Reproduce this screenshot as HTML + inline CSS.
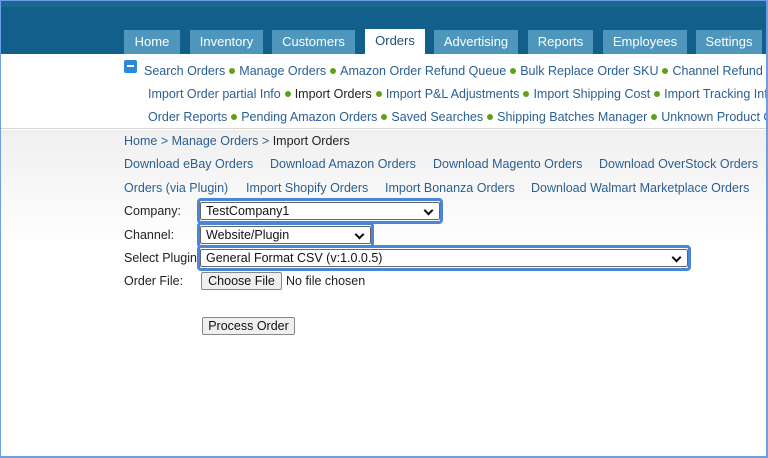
<!DOCTYPE html>
<html><head><style>
*{margin:0;padding:0;box-sizing:border-box}
body{width:768px;height:458px;overflow:hidden;font-family:"Liberation Sans",Arial,sans-serif;background:#fff;position:relative}
.frame{position:absolute;left:0;top:0;width:768px;height:458px;border:2px solid #6c9fe6;border-top:1px solid #6c9fe6;border-left:1px solid #6c9fe6;z-index:10;pointer-events:none}
.hdr{position:absolute;left:0;top:0;width:768px;height:54px;background:#135f8c}
.hdr .band{position:absolute;left:0;top:0;width:768px;height:7px;background:#1a6792}
.tab{position:absolute;top:30px;height:24px;background:#4e96bb;color:#fff;font-size:13px;text-align:center;line-height:24px}
.tab.a{background:#fff;color:#1c4f78;top:29px;height:25px}
.sub{position:absolute;left:0;top:54px;width:768px;height:75px;background:#fff;border-bottom:1px solid #d5d5d5}
.row{position:absolute;font-size:12.5px;color:#2a5f93;white-space:nowrap}
.row b{display:inline-block;width:6px;height:6px;border-radius:50%;background:#5ea21a;margin:0 4px 1px;vertical-align:middle}
.k{color:#222}
.main{position:absolute;left:0;top:130px;width:768px;height:328px;background:linear-gradient(#f0f0f0,#fff 120px)}
.t{position:absolute;font-size:12.5px;white-space:nowrap}
.lnk{color:#2a5f93}
.lbl{color:#222}
.ring{position:absolute;border:3px solid #4a86d6;border-radius:4px}
.sel{position:absolute;height:18px;border:1px solid #666;background:#fff;font-size:12.5px;color:#111;padding-left:5px;line-height:16px;border-radius:2px}
.sel:after{content:"";position:absolute;right:7px;top:4px;width:5px;height:5px;border-right:2px solid #111;border-bottom:2px solid #111;transform:rotate(45deg)}
.btn{position:absolute;height:18px;border:1px solid #888;background:#efefef;border-radius:2px;font-size:12.5px;color:#111;text-align:center;line-height:16px}
.ic{position:absolute;left:124px;top:60px;width:13px;height:13px;background:#2a8ad8;border-radius:2px}
.ic:after{content:"";position:absolute;left:3px;top:5px;width:7px;height:2px;background:#fff}
</style></head><body>
<div class="hdr"><div class="band"></div>
<div class="tab" style="left:124px;width:56px">Home</div>
<div class="tab" style="left:190px;width:73px">Inventory</div>
<div class="tab" style="left:272px;width:83px">Customers</div>
<div class="tab a" style="left:365px;width:60px">Orders</div>
<div class="tab" style="left:434px;width:84px">Advertising</div>
<div class="tab" style="left:528px;width:65px">Reports</div>
<div class="tab" style="left:603px;width:84px">Employees</div>
<div class="tab" style="left:696px;width:66px">Settings</div>
</div>
<div class="sub"></div>
<div class="ic"></div>
<div class="row" style="left:144px;top:64px">Search Orders<b></b>Manage Orders<b></b>Amazon Order Refund Queue<b></b>Bulk Replace Order SKU<b></b>Channel Refund Queue</div>
<div class="row" style="left:148px;top:87px">Import Order partial Info<b></b><span class="k">Import Orders</span><b></b>Import P&amp;L Adjustments<b></b>Import Shipping Cost<b></b>Import Tracking Info</div>
<div class="row" style="left:148px;top:110px">Order Reports<b></b>Pending Amazon Orders<b></b>Saved Searches<b></b>Shipping Batches Manager<b></b>Unknown Product Orders</div>
<div class="main"></div>
<div class="t lnk" style="left:124px;top:134px">Home &gt; Manage Orders &gt; <span class="lbl">Import Orders</span></div>
<div class="t lnk" style="left:124px;top:157px">Download eBay Orders</div>
<div class="t lnk" style="left:270px;top:157px">Download Amazon Orders</div>
<div class="t lnk" style="left:433px;top:157px">Download Magento Orders</div>
<div class="t lnk" style="left:599px;top:157px">Download OverStock Orders</div>
<div class="t lnk" style="left:124px;top:181px">Orders (via Plugin)</div>
<div class="t lnk" style="left:246px;top:181px">Import Shopify Orders</div>
<div class="t lnk" style="left:385px;top:181px">Import Bonanza Orders</div>
<div class="t lnk" style="left:531px;top:181px">Download Walmart Marketplace Orders</div>
<div class="t lbl" style="left:124px;top:204px">Company:</div>
<div class="t lbl" style="left:124px;top:228px">Channel:</div>
<div class="t lbl" style="left:124px;top:251px">Select Plugin</div>
<div class="t lbl" style="left:124px;top:274px">Order File:</div>
<div class="ring" style="left:197px;top:198px;width:246px;height:26px"></div>
<div class="ring" style="left:197px;top:222px;width:177px;height:26px"></div>
<div class="ring" style="left:197px;top:245px;width:494px;height:26px"></div>
<div class="sel" style="left:200px;top:202px;width:240px">TestCompany1</div>
<div class="sel" style="left:200px;top:226px;width:171px">Website/Plugin</div>
<div class="sel" style="left:200px;top:249px;width:488px">General Format CSV (v:1.0.0.5)</div>
<div class="btn" style="left:201px;top:272px;width:81px">Choose File</div>
<div class="t lbl" style="left:286px;top:274px">No file chosen</div>
<div class="btn" style="left:202px;top:317px;width:93px">Process Order</div>
<div class="frame"></div>
</body></html>
